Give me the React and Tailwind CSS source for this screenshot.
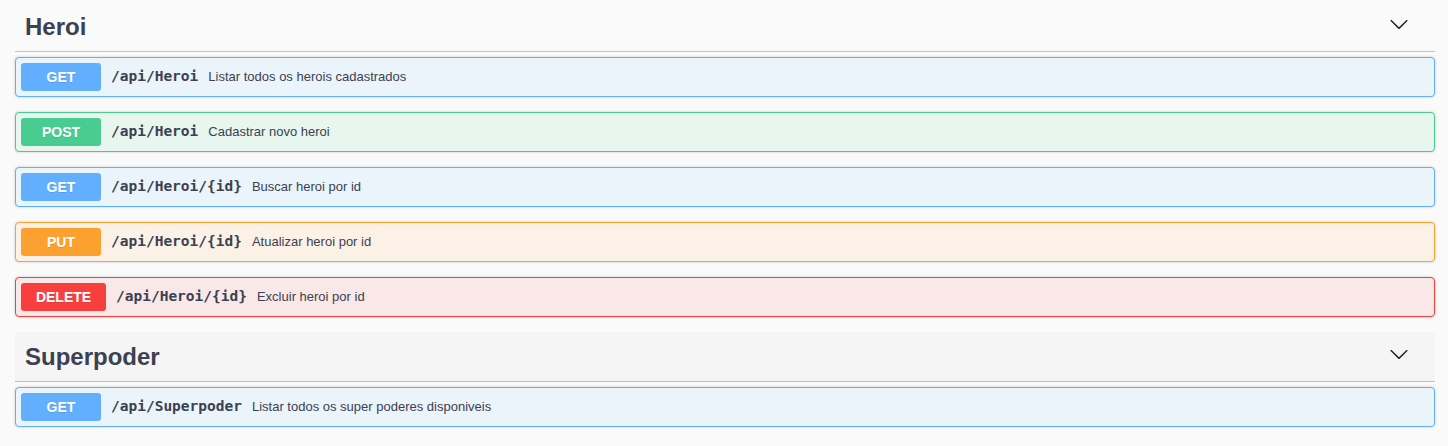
// Swagger-style operations list
const SECTIONS = [
  {
    name: "Heroi",
    hover: false,
    ops: [
      { method: "GET", path: "/api/Heroi", summary: "Listar todos os herois cadastrados" },
      { method: "POST", path: "/api/Heroi", summary: "Cadastrar novo heroi" },
      { method: "GET", path: "/api/Heroi/{id}", summary: "Buscar heroi por id" },
      { method: "PUT", path: "/api/Heroi/{id}", summary: "Atualizar heroi por id" },
      { method: "DELETE", path: "/api/Heroi/{id}", summary: "Excluir heroi por id" },
    ],
  },
  {
    name: "Superpoder",
    hover: true,
    ops: [
      { method: "GET", path: "/api/Superpoder", summary: "Listar todos os super poderes disponiveis" },
    ],
  },
];

const METHOD_STYLES = {
  GET: { row: "border-[#61affe] bg-[#ebf3fb]", badge: "bg-[#61affe] w-[80px]" },
  POST: { row: "border-[#49cc90] bg-[#e8f6f0]", badge: "bg-[#49cc90] w-[80px]" },
  PUT: { row: "border-[#fca130] bg-[#fbf1e6]", badge: "bg-[#fca130] w-[80px]" },
  DELETE: { row: "border-[#f93e3e] bg-[#fae7e7]", badge: "bg-[#f93e3e] w-[85px]" },
};

function Chevron() {
  return (
    <svg width="20" height="20" viewBox="0 0 20 20" className="mt-[-6px] text-[#222]">
      <path
        fill="currentColor"
        d="M17.418 6.109c.272-.268.709-.268.979 0s.271.701 0 .969l-7.908 7.83c-.27.268-.707.268-.979 0l-7.908-7.83c-.27-.268-.27-.701 0-.969.271-.268.709-.268.979 0L10 13.25l7.418-7.141z"
      />
    </svg>
  );
}

function Operation({ op }) {
  const s = METHOD_STYLES[op.method];
  return (
    <div
      className={`flex items-center h-[40px] mb-[15px] px-[5px] border rounded-[4px] shadow-[0_0_3px_rgba(0,0,0,0.19)] ${s.row}`}
    >
      <span
        className={`${s.badge} h-[28px] flex items-center justify-center rounded-[3px] text-white text-[14px] font-bold [text-shadow:0_1px_0_rgba(0,0,0,0.1)] font-['Liberation_Sans',Arial,sans-serif]`}
      >
        {op.method}
      </span>
      <span className="px-[10px] text-[14.5px] font-bold text-[#3b4151] font-['DejaVu_Sans_Mono',monospace]">
        {op.path}
      </span>
      <span className="text-[13px] text-[#3b4151] font-['Liberation_Sans',Arial,sans-serif]">
        {op.summary}
      </span>
    </div>
  );
}

export default function App() {
  return (
    <div className="min-h-[446px] bg-[#fafafa] pt-[2px]">
      <div className="ml-[15px] w-[1420px]">
        {SECTIONS.map((section) => (
          <section key={section.name}>
            <div
              className={`flex items-center justify-between h-[50px] pl-[10px] pr-[26px] mb-[5px] border-b border-[rgba(59,65,81,0.3)] ${
                section.hover ? "bg-[#f5f5f5]" : ""
              }`}
            >
              <h3 className="text-[24px] font-bold text-[#3b4151] font-['Liberation_Sans',Arial,sans-serif]">
                {section.name}
              </h3>
              <Chevron />
            </div>
            {section.ops.map((op, i) => (
              <Operation key={i} op={op} />
            ))}
          </section>
        ))}
      </div>
    </div>
  );
}
